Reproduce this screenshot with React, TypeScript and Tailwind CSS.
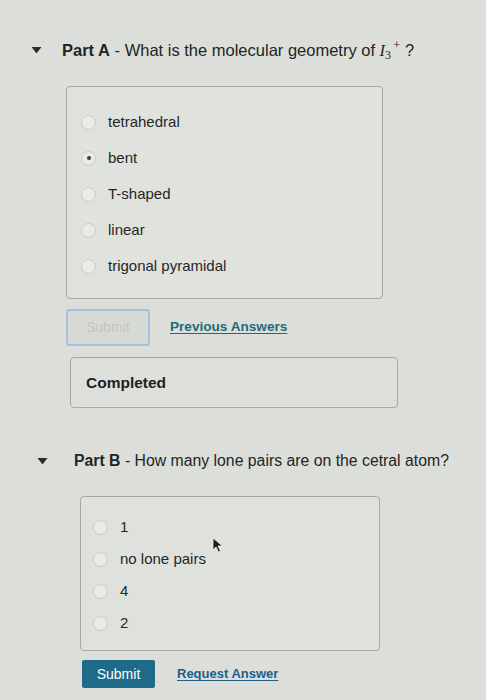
import React from 'react';

const sans = { fontFamily: '"Liberation Sans", Arial, sans-serif' };

function Caret() {
  return (
    <svg width="11" height="8" viewBox="0 0 11 8" className="shrink-0">
      <path d="M0.5 1 L10.5 1 L5.5 7.5 Z" fill="#2b2d2c" />
    </svg>
  );
}

function Radio({ checked }: { checked?: boolean }) {
  return (
    <span className="flex h-[15px] w-[15px] shrink-0 items-center justify-center rounded-full border border-[#c9ccc6] bg-[#e9ebe6]">
      {checked && <span className="h-[4px] w-[4px] rounded-full bg-[#3c3f3d]" />}
    </span>
  );
}

function Option({ label, checked }: { label: string; checked?: boolean }) {
  return (
    <div className="flex h-[16px] items-center gap-[12px]">
      <Radio checked={checked} />
      <span className="text-[15px] leading-[16px] text-[#252726]">{label}</span>
    </div>
  );
}

function Cursor() {
  return (
    <svg width="12" height="16" viewBox="0 0 12 16" className="absolute left-[131px] top-[40px]">
      <path d="M1 1 L1 13 L4 10 L6.5 15 L8.5 14 L6 9 L10.5 9 Z" fill="#1c1d1d" stroke="#f2f2f2" strokeWidth="0.8" />
    </svg>
  );
}

export default function App() {
  return (
    <div className="relative h-[700px] w-[486px] overflow-hidden bg-[#dcdfd9]" style={sans}>
      {/* Part A */}
      <div className="mt-[38px] flex h-[24px] items-center pl-[31px]">
        <Caret />
        <h2 className="ml-[20px] text-[16.5px] leading-[24px] text-[#232524]">
          <span className="font-bold">Part A</span> - What is the molecular geometry of{' '}
          <span className="italic" style={{ fontFamily: '"Liberation Serif", serif' }}>
            I<sub className="text-[12px] not-italic">3</sub>
            <sup className="ml-[2px] text-[13px] not-italic">+</sup>
          </span>{' '}
          ?
        </h2>
      </div>

      <div className="ml-[66px] mt-[24px] flex h-[213px] w-[317px] flex-col gap-[20px] rounded-[4px] border border-[#a6a9a3] bg-[#e0e3dd] pl-[14px] pt-[27px]">
        <Option label="tetrahedral" />
        <Option label="bent" checked />
        <Option label="T-shaped" />
        <Option label="linear" />
        <Option label="trigonal pyramidal" />
      </div>

      <div className="ml-[66px] mt-[10px] flex items-center gap-[20px]">
        <button className="h-[37px] w-[84px] rounded-[3px] border-2 border-[#a5bfdc] bg-[#d7dad4] text-[14px] text-[#c2c5c0]">
          Submit
        </button>
        <a className="text-[13.6px] font-bold text-[#1f6a7e] underline underline-offset-2">Previous Answers</a>
      </div>

      <div className="ml-[70px] mt-[11px] flex h-[51px] w-[328px] items-center rounded-[4px] border border-[#a6a9a3] bg-[#dde0da] pl-[15px]">
        <span className="text-[15.5px] font-bold text-[#1e201f]">Completed</span>
      </div>

      {/* Part B */}
      <div className="mt-[41px] flex h-[24px] items-center pl-[37px]">
        <Caret />
        <h2 className="ml-[26px] text-[15.8px] leading-[24px] text-[#232524]">
          <span className="font-bold">Part B</span> - How many lone pairs are on the cetral atom?
        </h2>
      </div>

      <div className="relative ml-[80px] mt-[23px] flex h-[155px] w-[300px] flex-col gap-[16px] rounded-[4px] border border-[#a6a9a3] bg-[#dfe1dc] pl-[12px] pt-[22px]">
        <Option label="1" />
        <Option label="no lone pairs" />
        <Option label="4" />
        <Option label="2" />
        <Cursor />
      </div>

      <div className="ml-[82px] mt-[9px] flex items-center gap-[22px]">
        <button className="h-[28px] w-[73px] rounded-[2px] bg-[#1d6a89] text-[14px] text-white">Submit</button>
        <a className="text-[13px] font-bold text-[#1f5e86] underline underline-offset-2">Request Answer</a>
      </div>
    </div>
  );
}
